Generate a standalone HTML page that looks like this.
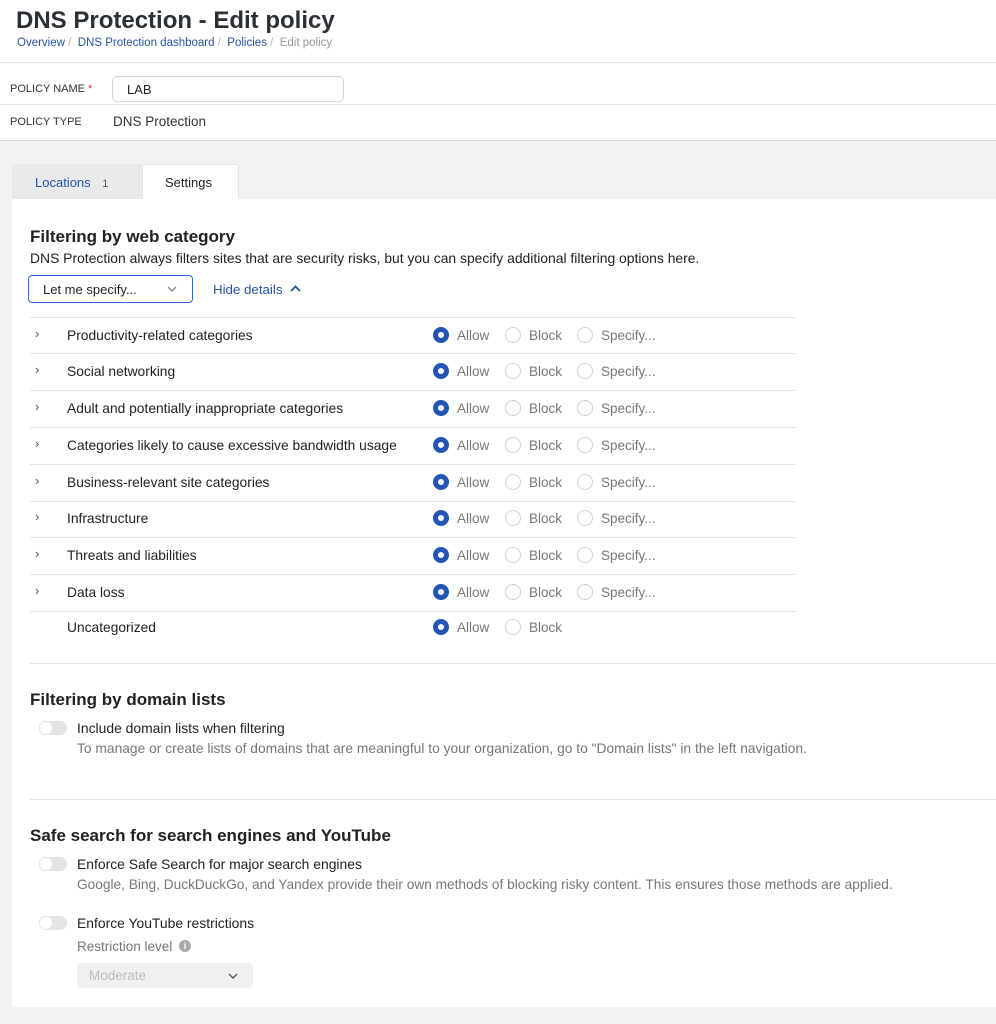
<!DOCTYPE html>
<html><head><meta charset="utf-8"><style>
*{box-sizing:border-box;margin:0;padding:0}
body{width:996px;height:1024px;background:#f1f2f4;font-family:"Liberation Sans",sans-serif;color:#222;position:relative;overflow:hidden}
.a{position:absolute;white-space:nowrap}
.hl{position:absolute;height:1px;background:#e2e3e6}
.rad{position:absolute;width:16px;height:16px;border-radius:50%;border:1px solid #cfd2d6;background:#fff}
.rad.on{border:5px solid #2454b4}
.lbl{position:absolute;font-size:13.5px;color:#777}
.cat{position:absolute;font-size:13.8px;color:#222;left:67px}
.chev{position:absolute;left:35px;font-size:13px;color:#555}
.tog{position:absolute;left:39px;width:28px;height:14px;border-radius:7px;background:#e3e4e6}
.tog::after{content:"";position:absolute;left:1px;top:1px;width:12px;height:12px;border-radius:50%;background:#fff}
</style></head><body>
<div class="a" style="left:0;top:0;width:996px;height:141px;background:#fff"></div>
<div class="a" style="left:16px;top:7px;font-size:24px;font-weight:bold;color:#2b2f36">DNS Protection - Edit policy</div>
<div class="a" style="left:17px;top:37px;font-size:11.5px;color:#2454a4">Overview <span style="color:#bbb">/</span> &nbsp;DNS Protection dashboard <span style="color:#bbb">/</span> &nbsp;Policies <span style="color:#bbb">/</span> &nbsp;<span style="color:#999">Edit policy</span></div>
<div class="hl" style="left:0;top:62px;width:996px"></div>
<div class="a" style="left:10px;top:83px;font-size:11px;color:#333">POLICY NAME <span style="color:#d33">*</span></div>
<div class="a" style="left:112px;top:76px;width:232px;height:26px;border:1px solid #d5d7da;border-radius:5px;font-size:13px;padding:5px 14px;color:#222">LAB</div>
<div class="hl" style="left:0;top:104px;width:996px"></div>
<div class="a" style="left:10px;top:116px;font-size:11px;color:#333">POLICY TYPE</div>
<div class="a" style="left:113px;top:114px;font-size:13.5px;color:#333">DNS Protection</div>
<div class="hl" style="left:0;top:140px;width:996px;background:#d8d9dc"></div>
<div class="a" style="left:12px;top:164px;width:130px;height:35px;background:#e9eaec"></div>
<div class="a" style="left:35px;top:175px;font-size:13px;color:#2454a4">Locations <span style="color:#555;font-size:11px;margin-left:8px">1</span></div>
<div class="a" style="left:142px;top:164px;width:97px;height:36px;background:#fff;border:1px solid #e3e4e6;border-bottom:none;border-radius:3px 3px 0 0"></div>
<div class="a" style="left:165px;top:175px;font-size:13px;color:#222">Settings</div>
<div class="a" style="left:12px;top:199px;width:990px;height:808px;background:#fff;border-radius:3px"></div>
<div class="a" style="left:30px;top:227px;font-size:17px;font-weight:bold;color:#222">Filtering by web category</div>
<div class="a" style="left:30px;top:250px;font-size:13.9px;color:#222">DNS Protection always filters sites that are security risks, but you can specify additional filtering options here.</div>
<div class="a" style="left:28px;top:275px;width:165px;height:28px;border:1px solid #2f6bd0;border-radius:4px;font-size:13px;padding:6px 14px;color:#222">Let me specify...</div>
<svg class="a" style="left:167px;top:285px" width="10" height="8"><path d="M1 2l4 4 4-4" fill="none" stroke="#777" stroke-width="1.2"/></svg>
<div class="a" style="left:213px;top:282px;font-size:13.3px;color:#2454a4">Hide details</div>
<svg class="a" style="left:290px;top:285px" width="11" height="8"><path d="M1 6l4.5-4.5L10 6" fill="none" stroke="#2454a4" stroke-width="1.8"/></svg>

<div class="hl" style="left:30px;top:317px;width:766px"></div>
<div class="hl" style="left:30px;top:353px;width:766px"></div>
<div class="hl" style="left:30px;top:390px;width:766px"></div>
<div class="hl" style="left:30px;top:427px;width:766px"></div>
<div class="hl" style="left:30px;top:464px;width:766px"></div>
<div class="hl" style="left:30px;top:501px;width:766px"></div>
<div class="hl" style="left:30px;top:537px;width:766px"></div>
<div class="hl" style="left:30px;top:574px;width:766px"></div>
<div class="hl" style="left:30px;top:611px;width:766px"></div>

<div class="chev" style="top:326px">›</div><div class="cat" style="top:328px">Productivity-related categories</div>
<div class="chev" style="top:362px">›</div><div class="cat" style="top:364px">Social networking</div>
<div class="chev" style="top:399px">›</div><div class="cat" style="top:401px">Adult and potentially inappropriate categories</div>
<div class="chev" style="top:436px">›</div><div class="cat" style="top:438px">Categories likely to cause excessive bandwidth usage</div>
<div class="chev" style="top:473px">›</div><div class="cat" style="top:475px">Business-relevant site categories</div>
<div class="chev" style="top:509px">›</div><div class="cat" style="top:511px">Infrastructure</div>
<div class="chev" style="top:546px">›</div><div class="cat" style="top:548px">Threats and liabilities</div>
<div class="chev" style="top:583px">›</div><div class="cat" style="top:585px">Data loss</div>
<div class="cat" style="top:620px">Uncategorized</div>

<div class="rad on" style="left:433px;top:327px"></div><div class="lbl" style="left:457px;top:328px">Allow</div><div class="rad" style="left:505px;top:327px"></div><div class="lbl" style="left:529px;top:328px">Block</div><div class="rad" style="left:577px;top:327px"></div><div class="lbl" style="left:601px;top:328px">Specify...</div>
<div class="rad on" style="left:433px;top:363px"></div><div class="lbl" style="left:457px;top:364px">Allow</div><div class="rad" style="left:505px;top:363px"></div><div class="lbl" style="left:529px;top:364px">Block</div><div class="rad" style="left:577px;top:363px"></div><div class="lbl" style="left:601px;top:364px">Specify...</div>
<div class="rad on" style="left:433px;top:400px"></div><div class="lbl" style="left:457px;top:401px">Allow</div><div class="rad" style="left:505px;top:400px"></div><div class="lbl" style="left:529px;top:401px">Block</div><div class="rad" style="left:577px;top:400px"></div><div class="lbl" style="left:601px;top:401px">Specify...</div>
<div class="rad on" style="left:433px;top:437px"></div><div class="lbl" style="left:457px;top:438px">Allow</div><div class="rad" style="left:505px;top:437px"></div><div class="lbl" style="left:529px;top:438px">Block</div><div class="rad" style="left:577px;top:437px"></div><div class="lbl" style="left:601px;top:438px">Specify...</div>
<div class="rad on" style="left:433px;top:474px"></div><div class="lbl" style="left:457px;top:475px">Allow</div><div class="rad" style="left:505px;top:474px"></div><div class="lbl" style="left:529px;top:475px">Block</div><div class="rad" style="left:577px;top:474px"></div><div class="lbl" style="left:601px;top:475px">Specify...</div>
<div class="rad on" style="left:433px;top:510px"></div><div class="lbl" style="left:457px;top:511px">Allow</div><div class="rad" style="left:505px;top:510px"></div><div class="lbl" style="left:529px;top:511px">Block</div><div class="rad" style="left:577px;top:510px"></div><div class="lbl" style="left:601px;top:511px">Specify...</div>
<div class="rad on" style="left:433px;top:547px"></div><div class="lbl" style="left:457px;top:548px">Allow</div><div class="rad" style="left:505px;top:547px"></div><div class="lbl" style="left:529px;top:548px">Block</div><div class="rad" style="left:577px;top:547px"></div><div class="lbl" style="left:601px;top:548px">Specify...</div>
<div class="rad on" style="left:433px;top:584px"></div><div class="lbl" style="left:457px;top:585px">Allow</div><div class="rad" style="left:505px;top:584px"></div><div class="lbl" style="left:529px;top:585px">Block</div><div class="rad" style="left:577px;top:584px"></div><div class="lbl" style="left:601px;top:585px">Specify...</div>
<div class="rad on" style="left:433px;top:619px"></div><div class="lbl" style="left:457px;top:620px">Allow</div><div class="rad" style="left:505px;top:619px"></div><div class="lbl" style="left:529px;top:620px">Block</div>

<div class="hl" style="left:30px;top:663px;width:966px"></div>
<div class="a" style="left:30px;top:690px;font-size:17px;font-weight:bold;color:#222">Filtering by domain lists</div>
<div class="tog" style="top:721px"></div>
<div class="a" style="left:77px;top:720px;font-size:13.9px;color:#222">Include domain lists when filtering</div>
<div class="a" style="left:77px;top:741px;font-size:13.8px;color:#777">To manage or create lists of domains that are meaningful to your organization, go to "Domain lists" in the left navigation.</div>
<div class="hl" style="left:30px;top:799px;width:966px"></div>
<div class="a" style="left:30px;top:826px;font-size:17px;font-weight:bold;color:#222">Safe search for search engines and YouTube</div>
<div class="tog" style="top:857px"></div>
<div class="a" style="left:77px;top:856px;font-size:13.9px;color:#222">Enforce Safe Search for major search engines</div>
<div class="a" style="left:77px;top:877px;font-size:13.7px;color:#777">Google, Bing, DuckDuckGo, and Yandex provide their own methods of blocking risky content. This ensures those methods are applied.</div>
<div class="tog" style="top:916px"></div>
<div class="a" style="left:77px;top:915px;font-size:13.9px;color:#222">Enforce YouTube restrictions</div>
<div class="a" style="left:77px;top:939px;font-size:13.5px;color:#777">Restriction level</div>
<div class="a" style="left:179px;top:940px;width:12px;height:12px;border-radius:50%;background:#aaa;color:#fff;font-size:9px;text-align:center;line-height:12px;font-weight:bold">i</div>
<div class="a" style="left:77px;top:963px;width:176px;height:25px;background:#eff0f2;border-radius:4px;font-size:13.5px;color:#bbb;padding:5px 12px">Moderate</div>
<svg class="a" style="left:228px;top:972px" width="10" height="8"><path d="M1 2l4 4 4-4" fill="none" stroke="#555" stroke-width="1.4"/></svg>
</body></html>
